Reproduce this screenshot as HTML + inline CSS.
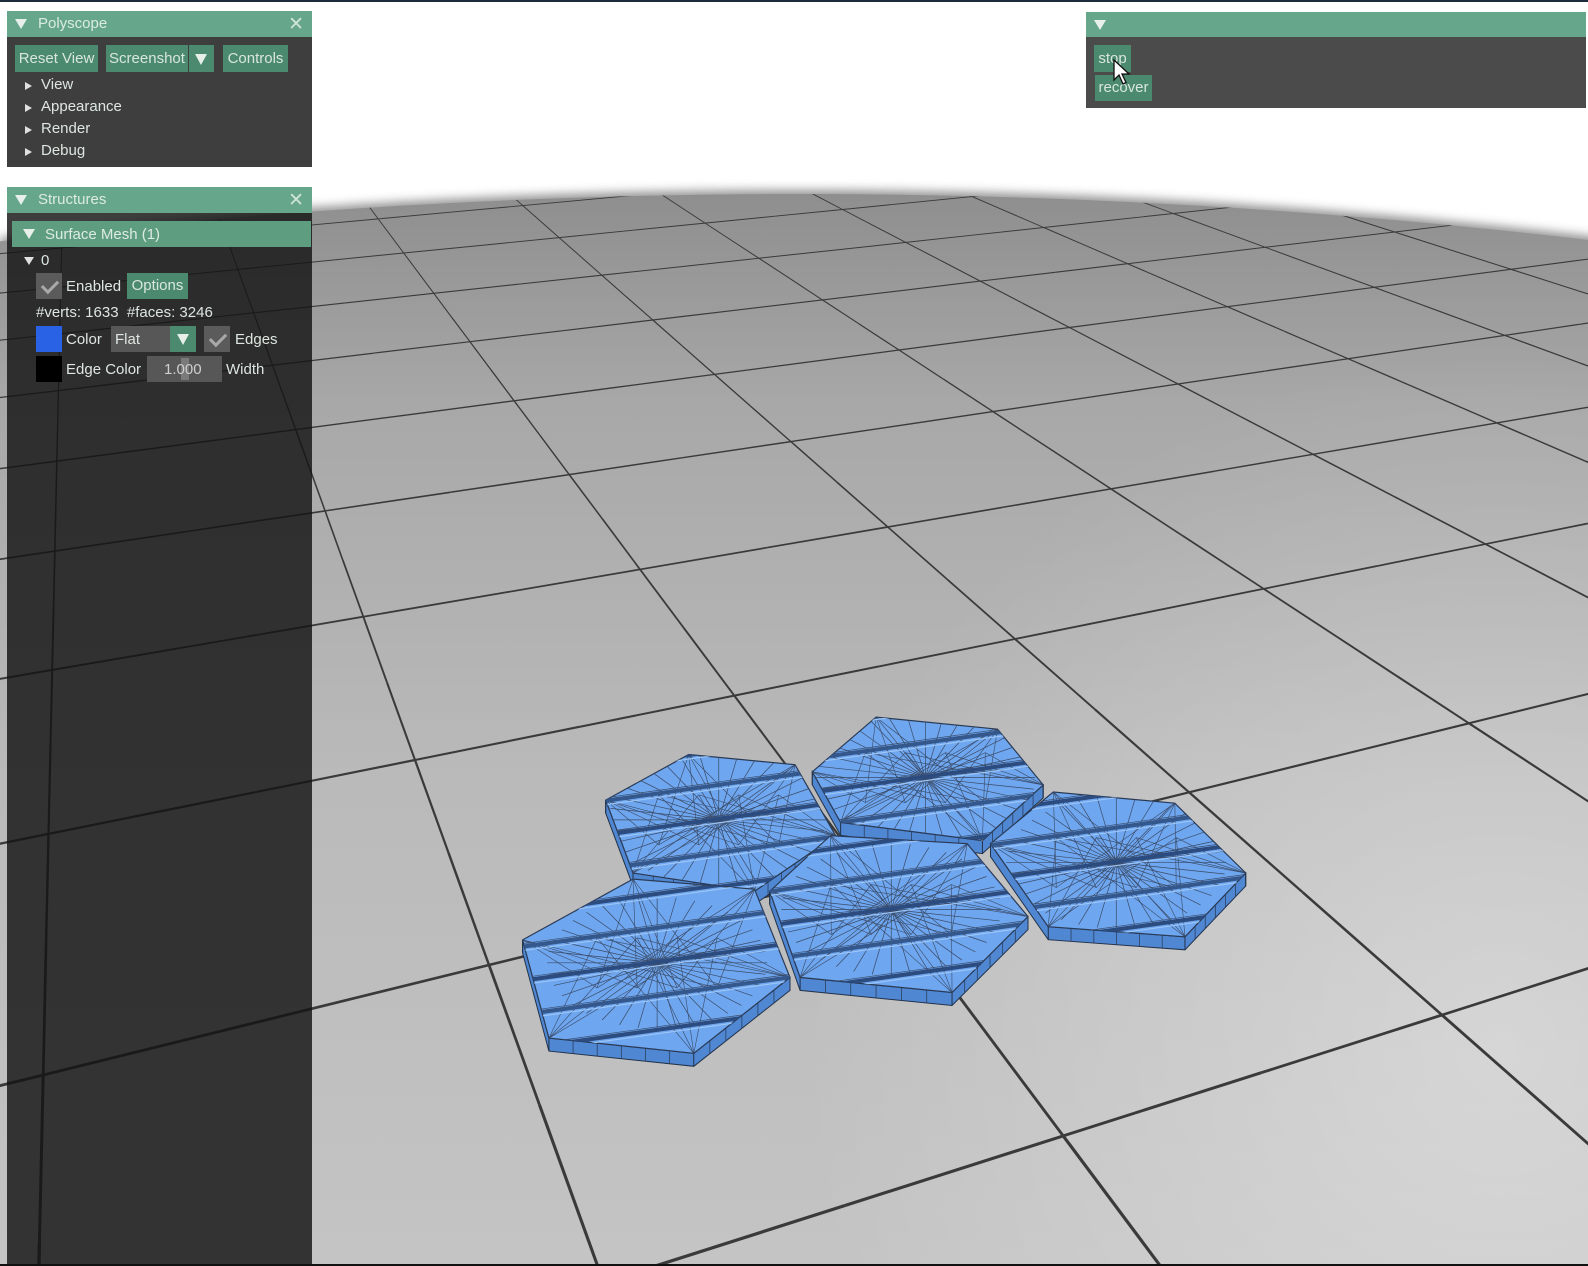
<!DOCTYPE html>
<html><head><meta charset="utf-8">
<style>
*{margin:0;padding:0;box-sizing:border-box}
html,body{width:1588px;height:1266px;overflow:hidden;background:#fff;font-family:"Liberation Sans","DejaVu Sans",sans-serif}
#scene{position:absolute;left:0;top:0}
.panel{position:absolute;background:rgba(20,20,20,0.82);color:#dde6e1;font-size:15px;overflow:hidden}
.title{position:absolute;left:0;right:0;top:0;height:26px;background:#66a68a;color:#dcebe3}
.title .t{position:absolute;left:31px;top:4px}
.tri{position:absolute;width:0;height:0;border-left:6px solid transparent;border-right:6px solid transparent;border-top:10px solid #e8f0ec}
.rtri{position:absolute;width:0;height:0;border-top:4px solid transparent;border-bottom:4px solid transparent;border-left:7px solid #e0e0e0}
.dtri{position:absolute;width:0;height:0;border-left:5px solid transparent;border-right:5px solid transparent;border-top:8px solid #e0e0e0}
.x{position:absolute;right:8px;top:2px;font-size:19px;color:#cfe2d8}
.btn{position:absolute;background:#4b8a6e;color:#d9e6df;height:27px;line-height:27px;text-align:center;font-size:15px}
.txt{position:absolute;white-space:nowrap}
.chk{position:absolute;width:26px;height:26px;background:#5b5b5b}
.chk:after{content:"";position:absolute;left:9px;top:4px;width:7px;height:13px;border-right:3px solid #a9a9a9;border-bottom:3px solid #a9a9a9;transform:rotate(45deg)}
</style></head><body>
<svg id="scene" width="1588" height="1266" viewBox="0 0 1588 1266">
<defs>
<linearGradient id="fl" x1="0" y1="190" x2="0" y2="1266" gradientUnits="userSpaceOnUse">
<stop offset="0" stop-color="#8e8e8e"/><stop offset="0.2" stop-color="#a8a8a8"/><stop offset="0.55" stop-color="#bababa"/><stop offset="1" stop-color="#c4c4c4"/>
</linearGradient>
<radialGradient id="hl" cx="1500" cy="1050" r="700" gradientUnits="userSpaceOnUse">
<stop offset="0" stop-color="#fff" stop-opacity="0.35"/><stop offset="1" stop-color="#fff" stop-opacity="0"/>
</radialGradient>
<filter id="bl"><feGaussianBlur stdDeviation="5"/></filter>
<clipPath id="fc"><path id="fp0" d=""/></clipPath>
</defs>
<path id="shadow" d="" fill="#777" filter="url(#bl)" opacity="0.8"/>
<path id="floor" d="" fill="url(#fl)"/>
<path id="floor2" d="" fill="url(#hl)"/>
<g id="grid" clip-path="url(#fc)" stroke="#3a3a3a" stroke-linecap="butt"></g>
<g id="hexes"></g>
<rect x="0" y="1264" width="1588" height="2" fill="#111"/>
<rect x="0" y="0" width="1588" height="2" fill="#1c2a3a"/>
</svg>

<div class="panel" style="left:7px;top:11px;width:305px;height:156px">
<div class="title"><div class="tri" style="left:8px;top:8px"></div><span class="t">Polyscope</span><span class="x">✕</span></div>
<div class="btn" style="left:8px;top:34px;width:83px">Reset View</div>
<div class="btn" style="left:99px;top:34px;width:82px">Screenshot</div>
<div class="btn" style="left:182px;top:34px;width:25px"><div class="dtri" style="left:6px;top:9px;border-left-width:6px;border-right-width:6px;border-top-width:11px;border-top-color:#e6efe9"></div></div>
<div class="btn" style="left:216px;top:34px;width:65px">Controls</div>
<div class="rtri" style="left:18px;top:71px"></div><div class="txt" style="left:34px;top:65px">View</div>
<div class="rtri" style="left:18px;top:93px"></div><div class="txt" style="left:34px;top:87px">Appearance</div>
<div class="rtri" style="left:18px;top:115px"></div><div class="txt" style="left:34px;top:109px">Render</div>
<div class="rtri" style="left:18px;top:137px"></div><div class="txt" style="left:34px;top:131px">Debug</div>
</div>

<div class="panel" style="left:7px;top:187px;width:305px;height:1077px">
<div class="title"><div class="tri" style="left:8px;top:8px"></div><span class="t">Structures</span><span class="x">✕</span></div>
<div style="position:absolute;left:5px;top:34px;width:299px;height:26px;background:#5f9d80"></div>
<div class="tri" style="left:16px;top:42px"></div>
<div class="txt" style="left:38px;top:39px;color:#dcebe3">Surface Mesh (1)</div>
<div class="dtri" style="left:17px;top:70px"></div><div class="txt" style="left:34px;top:65px">0</div>
<div class="chk" style="left:29px;top:86px"></div>
<div class="txt" style="left:59px;top:91px">Enabled</div>
<div class="btn" style="left:120px;top:86px;width:61px;height:26px;line-height:26px">Options</div>
<div class="txt" style="left:29px;top:117px">#verts: 1633&nbsp; #faces: 3246</div>
<div style="position:absolute;left:29px;top:139px;width:26px;height:26px;background:#2a62e6"></div>
<div class="txt" style="left:59px;top:144px">Color</div>
<div style="position:absolute;left:104px;top:139px;width:85px;height:26px;background:#575757"></div>
<div class="txt" style="left:108px;top:144px">Flat</div>
<div style="position:absolute;left:163px;top:139px;width:26px;height:26px;background:#4b8a6e"></div>
<div class="dtri" style="left:170px;top:147px;border-left-width:6px;border-right-width:6px;border-top-width:11px;border-top-color:#e6efe9"></div>
<div class="chk" style="left:197px;top:139px"></div>
<div class="txt" style="left:228px;top:144px">Edges</div>
<div style="position:absolute;left:29px;top:169px;width:26px;height:26px;background:#000"></div>
<div class="txt" style="left:59px;top:174px">Edge Color</div>
<div style="position:absolute;left:140px;top:169px;width:75px;height:26px;background:#575757"></div>
<div style="position:absolute;left:174px;top:171px;width:8px;height:22px;background:#7a7a7a"></div>
<div class="txt" style="left:157px;top:174px;color:#cfcfcf">1.000</div>
<div class="txt" style="left:219px;top:174px">Width</div>
</div>

<div class="panel" style="left:1086px;top:12px;width:500px;height:96px;background:rgba(50,50,50,0.88)">
<div class="title" style="height:25px"><div class="tri" style="left:8px;top:8px"></div></div>
<div class="btn" style="left:8px;top:33px;width:37px;height:27px;line-height:27px">stop</div>
<div class="btn" style="left:9px;top:63px;width:57px;height:26px;line-height:26px">recover</div>
<svg style="position:absolute;left:27px;top:47px" width="20" height="28" viewBox="0 0 20 28"><path d="M1 1 L1 21 L6 16 L10 25 L13 23.5 L9 15 L16 15 Z" fill="#fff" stroke="#111" stroke-width="1.3"/></svg>
</div>

<script>
(function(){
var NS="http://www.w3.org/2000/svg";
function hy(x){return 194+7.4e-5*(x-800)*(x-800);}
var d="M0 "+hy(0).toFixed(1);
for(var x=20;x<=1600;x+=20){d+=" L"+x+" "+hy(x).toFixed(1);}
var fd=d+" L1600 1266 L0 1266 Z";
document.getElementById("floor").setAttribute("d",fd);
document.getElementById("floor2").setAttribute("d",fd);
document.getElementById("fp0").setAttribute("d",fd);
var sd="M0 "+(hy(0)-4);
for(var x=20;x<=1600;x+=20){sd+=" L"+x+" "+(hy(x)-4).toFixed(1);}
sd+=" L1600 1266 L0 1266 Z";
document.getElementById("shadow").setAttribute("d",sd);
var src=[[0,4],[2,4],[0,5],[2,6]], dst=[[415,760],[1015,639],[489,965],[1442,1015]];
var A=[],b=[];
for(var i=0;i<4;i++){var u=src[i][0],v=src[i][1],X=dst[i][0],Y=dst[i][1];
A.push([u,v,1,0,0,0,-u*X,-v*X]);b.push(X);
A.push([0,0,0,u,v,1,-u*Y,-v*Y]);b.push(Y);}
var n=8;
for(var c=0;c<n;c++){var p=c;for(var r=c+1;r<n;r++)if(Math.abs(A[r][c])>Math.abs(A[p][c]))p=r;
var t=A[c];A[c]=A[p];A[p]=t;t=b[c];b[c]=b[p];b[p]=t;
for(var r=0;r<n;r++){if(r==c)continue;var f=A[r][c]/A[c][c];for(var k=c;k<n;k++)A[r][k]-=f*A[c][k];b[r]-=f*b[c];}}
var h=[];for(var i=0;i<n;i++)h.push(b[i]/A[i][i]);
function P(u,v){var w=h[6]*u+h[7]*v+1;return [(h[0]*u+h[1]*v+h[2])/w,(h[3]*u+h[4]*v+h[5])/w,w];}
var wref=Math.abs(P(1,5)[2]);
var g=document.getElementById("grid");
function vis(q){return q[2]>0.0005 && q[0]>-3000 && q[0]<5000 && q[1]>-3000 && q[1]<5000;}
function seg(a,c){if(!vis(a)||!vis(c))return;
if(a[1]>1300&&c[1]>1300)return;
var w=Math.max(0.6,Math.min(3.4,2.4*wref/((a[2]+c[2])/2)));
var l=document.createElementNS(NS,"line");l.setAttribute("x1",a[0].toFixed(1));l.setAttribute("y1",a[1].toFixed(1));l.setAttribute("x2",c[0].toFixed(1));l.setAttribute("y2",c[1].toFixed(1));l.setAttribute("stroke-width",w.toFixed(2));g.appendChild(l);}
for(var u=-30;u<=40;u++){for(var v=-150;v<40;v+=0.5)seg(P(u,v),P(u,v+0.5));}
for(var v=-150;v<=40;v++){for(var u=-60;u<60;u+=0.5)seg(P(u,v),P(u+0.5,v));}
var hexes=[
[[598,790],[680,745],[785,755],[825,825],[745,880],[625,862]],
[[802,762],[865,708],[985,720],[1030,775],[970,830],[830,812]],
[[978,833],[1040,782],[1160,793],[1230,862],[1170,925],[1035,915]],
[[760,880],[820,825],[955,833],[1015,905],[940,980],[790,965]],
[[516,928],[625,868],[745,878],[780,965],[685,1040],[542,1025]]];
var s=1.0128, th=13;
var hg=document.getElementById("hexes");
var defs=document.querySelector("defs");
function pstr(pts){return pts.map(function(p){return p[0].toFixed(1)+","+p[1].toFixed(1)}).join(" ");}
function poly(par,pts,fill,stroke,sw){var e=document.createElementNS(NS,"polygon");e.setAttribute("points",pstr(pts));e.setAttribute("fill",fill);if(stroke){e.setAttribute("stroke",stroke);e.setAttribute("stroke-width",sw);}par.appendChild(e);return e;}
function ln(par,a,b2,col,w){var l=document.createElementNS(NS,"line");l.setAttribute("x1",a[0]);l.setAttribute("y1",a[1]);l.setAttribute("x2",b2[0]);l.setAttribute("y2",b2[1]);l.setAttribute("stroke",col);l.setAttribute("stroke-width",w);par.appendChild(l);}
[1,0,2,3,4].forEach(function(i){var p=hexes[i].map(function(q){return [q[0]*s,q[1]*s];});
var bot=p.map(function(q){return [q[0],q[1]+th];});
var side=[p[0],p[5],p[4],p[3],bot[3],bot[4],bot[5],bot[0]];
poly(hg,side,"#4f87d2","#22324a",1);
for(var k=3;k<=5;k++)ln(hg,p[k],bot[k],"#22324a",1);
ln(hg,p[0],bot[0],"#22324a",1);
for(var k=1;k<6;k++){var f=k/6;ln(hg,[p[4][0]+(p[3][0]-p[4][0])*f,p[4][1]+(p[3][1]-p[4][1])*f],[p[4][0]+(p[3][0]-p[4][0])*f,p[4][1]+(p[3][1]-p[4][1])*f+th],"#2b3f60",0.8);
ln(hg,[p[5][0]+(p[4][0]-p[5][0])*f,p[5][1]+(p[4][1]-p[5][1])*f],[p[5][0]+(p[4][0]-p[5][0])*f,p[5][1]+(p[4][1]-p[5][1])*f+th],"#2b3f60",0.8);}
poly(hg,p,"#6ea6ef","#2a3a55",1.2);
var cp=document.createElementNS(NS,"clipPath");cp.setAttribute("id","hc"+i);poly(cp,p,"#000");defs.appendChild(cp);
var gg=document.createElementNS(NS,"g");gg.setAttribute("clip-path","url(#hc"+i+")");hg.appendChild(gg);
var cx=0,cy=0;p.forEach(function(q){cx+=q[0];cy+=q[1]});cx/=6;cy/=6;
for(var k=0;k<36;k++){var ang=k/36*Math.PI*2;var r=110;ln(gg,[cx,cy],[cx+Math.cos(ang)*r,cy+Math.sin(ang)*r*0.6],"#3a4a66",0.7);}
for(var k=0;k<6;k++){var q=p[k];for(var j=0;j<4;j++){ln(gg,q,[cx+(j-1.5)*40,cy+(k<3?25:-25)],"#3a4a66",0.6);}}
for(var k=-2;k<=2;k++){var y0=cy+k*34+20,y1=cy+k*34-22;
var col=(k%2==0)?"#2c4c80":"#34578c";
ln(gg,[cx-150,y0],[cx+150,y1],col,4);ln(gg,[cx-150,y0+4],[cx+150,y1+4],"#9cc5f7",1.2);ln(gg,[cx-150,y0-3],[cx+150,y1-3],"#3a4a66",0.7);}
});
})();
</script>
</body></html>
